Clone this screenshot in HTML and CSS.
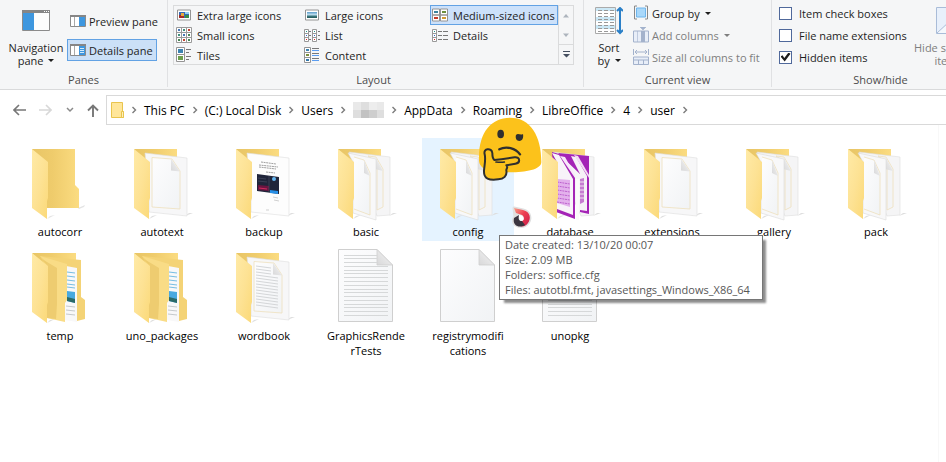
FILE: index.html
```html
<!DOCTYPE html>
<html lang="en">
<head>
<meta charset="utf-8">
<title>user</title>
<link rel="stylesheet" href="styles.css">
</head>
<body>
<svg class="defs" aria-hidden="true">
  <defs>
    <linearGradient id="back" x1="0" x2="1" y1="0" y2="0"><stop offset="0" stop-color="#e8c566"/><stop offset=".45" stop-color="#efcc6c"/><stop offset="1" stop-color="#fbdc81"/></linearGradient>
    <linearGradient id="front" x1="0" x2="1" y1="0" y2="1"><stop offset="0" stop-color="#ffeaa6"/><stop offset=".5" stop-color="#fde294"/><stop offset="1" stop-color="#fbd978"/></linearGradient>
    <linearGradient id="paper" x1="0" x2="1" y1="0" y2="1"><stop offset="0" stop-color="#fdfdfe"/><stop offset="1" stop-color="#f1f3f5"/></linearGradient>
    <linearGradient id="fold" x1="0" x2="1" y1="1" y2="0"><stop offset="0" stop-color="#d8d8d9"/><stop offset="1" stop-color="#f6f6f6"/></linearGradient>
    <linearGradient id="photo" x1="0" x2="0" y1="0" y2="1"><stop offset="0" stop-color="#5b9ccb"/><stop offset=".5" stop-color="#c8e4f1"/><stop offset=".65" stop-color="#3c7a83"/><stop offset="1" stop-color="#265a58"/></linearGradient>
    <linearGradient id="drop" x1="0" x2="1" y1="0" y2="1"><stop offset="0" stop-color="#f9a18a"/><stop offset=".45" stop-color="#ee3f52"/><stop offset="1" stop-color="#c81c48"/></linearGradient>

    <symbol id="folder-back" viewBox="0 0 64 80">
      <path d="M50 64l7-3-1 2-5 2zM19 75l8-4-5 1z" fill="#e4e4e4"/>
      <path d="M4 5h43v36l4 4v19H19L4 40z" fill="url(#back)"/>
    </symbol>
    <symbol id="folder-thin" viewBox="0 0 64 80">
      <path d="M55 72l8-3-4 0zM19 75l8-4-5 1z" fill="#dedede"/>
      <path d="M4 5h43v40H19z" fill="url(#back)"/>
    </symbol>
    <symbol id="folder-front" viewBox="0 0 64 80">
      <path d="M4 5l16 13v36l-1 3v18L4 64z" fill="url(#front)"/>
    </symbol>
    <symbol id="page-one" viewBox="0 0 64 80">
      <path d="M15 9l42 5v58l-38-4V54z" fill="#f7f7f8" stroke="#dedede" stroke-width=".6"/>
      <path d="M22 13.500l20 1.500 8 12v38l-28-2z" fill="url(#paper)" stroke="#eee0bd" stroke-width=".8"/>
      <path d="M41 15v11.500l9 1z" fill="url(#fold)"/>
    </symbol>
    <symbol id="page-two" viewBox="0 0 64 80">
      <path d="M15 8l41 5v58l-13 1z" fill="#f5f5f6" stroke="#dedede" stroke-width=".6"/>
      <path d="M34 12l8 1 7 12v38l-6 3V18z" fill="#f3f4f6" stroke="#eee0bd" stroke-width=".8"/>
      <path d="M42 14l-1 11 8 2z" fill="url(#fold)"/>
      <path d="M14 9l28 6v61l-23-7V18z" fill="#f8f8f9" stroke="#dadada" stroke-width=".6"/>
      <path d="M20 13l10 3 6 13v42l-16-6" fill="url(#paper)" stroke="#eee0bd" stroke-width=".8"/>
      <path d="M30 16v13l6 3z" fill="url(#fold)"/>
    </symbol>
    <symbol id="icon-empty" viewBox="0 0 64 80"><use href="#folder-back"/><use href="#folder-front"/></symbol>
    <symbol id="icon-one" viewBox="0 0 64 80"><use href="#folder-thin"/><use href="#page-one"/><use href="#folder-front"/></symbol>
    <symbol id="icon-two" viewBox="0 0 64 80"><use href="#folder-thin"/><use href="#page-two"/><use href="#folder-front"/></symbol>
    <symbol id="icon-backup" viewBox="0 0 64 80">
      <use href="#folder-thin"/>
      <path d="M15 9l42 5v58l-38-4V54z" fill="#fdfdfd" stroke="#dedede" stroke-width=".6"/>
      <path d="M29 18l15 2M27 21l19 2M27 23l17 2M34 28l9 1" stroke="#888" stroke-width=".8" stroke-dasharray="2 .6"/>
      <path d="M25 30l22 3v17l-22-3z" fill="#20253a"/>
      <path d="M26 41l11 1v5l-11-1z" fill="#6b1540"/>
      <path d="M27 44l8 1" stroke="#d22b5f"/>
      <path d="M38 46l8 1v3l-8-1z" fill="#2790e8"/>
      <path d="M37 32v16M26 34l8 1M26 37l9 1" stroke="#4c5368" stroke-width=".6"/>
      <circle cx="42" cy="35" r="2" fill="#65b8f2"/>
      <path d="M41 53l5 1M42 56l5 1M34 66h3" stroke="#bbb" stroke-width=".7"/>
      <use href="#folder-front"/>
    </symbol>
    <symbol id="icon-wordbook" viewBox="0 0 64 80">
      <use href="#folder-thin"/><use href="#page-one"/>
      <path d="M24 18l15 2M24 21l15 2M24 24l15 2M24 27l22 3M24 30l22 3M24 33l22 3M24 36l22 3M24 39l22 3M24 42l22 3M24 45l22 3M24 48l22 3M24 51l22 3M24 54l22 3M24 57l22 3" stroke="#d4d6d8" stroke-width="1"/>
      <use href="#folder-front"/>
    </symbol>
    <symbol id="icon-database" viewBox="0 0 64 80">
      <use href="#folder-thin"/>
      <path d="M15 8l41 5v58l-13 1z" fill="#f5f5f6" stroke="#dedede" stroke-width=".6"/>
      <path d="M20 9l31 3v58l-9-2V30z" fill="#a424b6"/>
      <path d="M33 12l5 1 11 19v35l-7-1V30z" fill="#f6f1f7"/>
      <path d="M36 11l4 1 11 19v3z" fill="#f3ddf5"/>
      <path d="M42 35l4-1v24l-4 2z" fill="#c67bd0"/>
      <path d="M41 38h5m-5 4h5m-5 4h5m-5 4h5m-5 4h5" stroke="#fff" stroke-width=".8"/>
      <path d="M14 8l11 3 12 22v42l-19-7z" fill="#a424b6"/>
      <path d="M14 9l7 2 14 24v36l-16-6V18z" fill="#f8f3f9"/>
      <path d="M22 12l5 1 10 18v3z" fill="#f8e8fa"/>
      <path d="M20 35l12 1v27l-13-4z" fill="#e3b0ec"/>
      <path d="M19 38l13 2m-13 2l13 2m-13 2l13 2m-13 2l13 2m-13 2l13 2m-13 2l13 2" stroke="#b44ec5" stroke-width=".8" stroke-dasharray="2 .7"/>
      <path d="M38 35h3v41h-3z" fill="#fafafa"/>
      <use href="#folder-front"/>
    </symbol>
    <symbol id="icon-nested" viewBox="0 0 64 80">
      <path d="M19 75l8-4-5 1z" fill="#dedede"/>
      <path d="M4 5h44v22H19z" fill="url(#back)"/>
      <path d="M12 8l41 4v37l4 3v19l-8 2z" fill="#f4d376"/>
      <path d="M38 18l11 2v54l-12-2z" fill="#f8f8f9"/>
      <path d="M39 24l8 1m-8 3l8 1m-8 3l8 1m-8 3l8 1m-8 2l8 1" stroke="#77bde3" stroke-width="1"/>
      <path d="M39 43l8 1v11l-8-2z" fill="#48a9e0"/><path d="M39 49l8 2v4l-8-2z" fill="#2b6a68"/>
      <path d="M38 58l9 1m-9 3l9 1m-9 3l9 1" stroke="#c5c9cc"/>
      <path d="M12 8l27 8v36l-2 3v19l-18-4V15z" fill="#f9dc86"/>
      <path d="M14 11l15 9v36l-1 15-9-1V17z" fill="#e9c768" opacity=".75"/>
      <use href="#folder-front"/>
    </symbol>
    <symbol id="icon-file" viewBox="0 0 64 80">
      <path d="M4.500 1.500H43L58.500 17v56.500h-54z" fill="url(#paper)" stroke="#cfcfcf"/>
      <path d="M43 1.500V17h15.500z" fill="url(#fold)" stroke="#cfcfcf" stroke-width=".8"/>
    </symbol>
    <symbol id="icon-text" viewBox="0 0 64 80">
      <use href="#icon-file"/>
      <path d="M10 7.500h33M10 10.500h33M10 14.500h33M10 18.500h44M10 22.500h44M10 25.500h44M10 29.500h44M10 33.500h44M10 37.500h44M10 41.500h44M10 44.500h44M10 48.500h44M10 52.500h44M10 56.500h44M10 59.500h44M10 63.500h44M10 67.500h44" stroke="#d6d8d9"/>
    </symbol>
    <symbol id="chevron" viewBox="0 0 6 8"><path d="M1.500 1l3 3-3 3" fill="none" stroke="#7b7b7b" stroke-width="1.400"/></symbol>
  </defs>
</svg>

<header class="ribbon">
  <section class="group panes" aria-label="Panes">
    <div class="group-body">
      <button class="big-button nav-pane">
        <svg width="28" height="21" viewBox="0 0 28 21"><path d="M.5.500h27v20H.5z" fill="#fdfdfd" stroke="#8b8b8b"/><path d="M0 0h28v3H0z" fill="#868686"/><path d="M1 3h11v17H1z" fill="#3e97df"/><path d="M22 1h1v1h-1zM24 1h1v1h-1zM26 1h1v1h-1z" fill="#fff"/></svg>
        <span>Navigation<br>pane <i class="caret"></i></span>
      </button>
      <div class="pane-list">
        <button class="small-button">
          <svg width="16" height="12" viewBox="0 0 16 12"><path d="M.5.500h15v11H.5z" fill="#fff" stroke="#8b8b8b"/><path d="M0 0h16v2H0z" fill="#868686"/><path d="M4 2h1v9H4z" fill="#aaa"/><path d="M9 2h6v9H9z" fill="#3e97df"/></svg>
          Preview pane
        </button>
        <button class="small-button pressed" aria-pressed="true">
          <svg width="16" height="12" viewBox="0 0 16 12"><path d="M.5.500h15v11H.5z" fill="#fff" stroke="#8b8b8b"/><path d="M0 0h16v2H0z" fill="#868686"/><path d="M4 2h1v9H4z" fill="#aaa"/><path d="M9 2h6v9H9z" fill="#3e97df"/><path d="M10 4.500h4M10 6.500h4M10 8.500h4" stroke="#d4eafa"/></svg>
          Details pane
        </button>
      </div>
    </div>
    <h2>Panes</h2>
  </section>

  <section class="group layout" aria-label="Layout">
    <div class="gallery">
      <div class="views">
        <button><svg width="16" height="16" viewBox="0 0 16 16"><path d="M1.500 3h13v10h-13z" fill="#fff" stroke="#949494"/><path d="M3 5h10v6H3z" fill="#3569b5"/><path d="M3 8h5v3H3z" fill="#a52b25"/><path d="M5 6h3v3H5z" fill="#e8a93e"/><path d="M9 8h4v3H9z" fill="#3b8c48"/><path d="M9 5h4v2H9z" fill="#8fd0f3"/></svg>Extra large icons</button>
        <button><svg width="16" height="16" viewBox="0 0 16 16"><path d="M1.500 3h13v10h-13z" fill="#fff" stroke="#949494"/><path d="M3 5h10v6H3z" fill="url(#photo)"/></svg>Large icons</button>
        <button class="selected" aria-pressed="true"><svg width="16" height="16" viewBox="0 0 16 16"><path d="M.5 2h7v6h-7zM8.500 2h7v6h-7zM.5 8h7v6h-7zM8.500 8h7v6h-7z" fill="#fff" stroke="#949494"/><path d="M2 4h4v2H2z" fill="#3b83a0"/><path d="M10 4h4v2h-4z" fill="#6c8f3c"/><path d="M2 10h4v2H2z" fill="#c53a2a"/><path d="M10 10h4v2h-4z" fill="#cf9a36"/></svg>Medium-sized icons</button>
        <button><svg width="16" height="16" viewBox="0 0 16 16"><path d="M.5.500h15v15H.5zM5.500 0v16M10.500 0v16M0 5.500h16M0 10.500h16" fill="#fff" stroke="#9a9a9a"/><path d="M2 2h2v2H2zM7 7h2v2H7z" fill="#4678b5"/><path d="M7 2h2v2H7zM2 7h2v2H2z" fill="#41907c"/><path d="M12 2h2v2h-2zM7 12h2v2H7z" fill="#c04432"/><path d="M12 7h2v2h-2zM2 12h2v2H2zM12 12h2v2h-2z" fill="#4a8554"/></svg>Small icons</button>
        <button><svg width="16" height="16" viewBox="0 0 16 16"><path d="M.5 2.500h4v12h-4zM8.500 2.500h4v12h-4zM0 6.500h5M0 10.500h5M8 6.500h5M8 10.500h5" fill="#fff" stroke="#999"/><path d="M2 4h1v1H2zM10 4h1v1h-1z" fill="#298"/><path d="M2 8h1v1H2zM10 8h1v1h-1z" fill="#36c"/><path d="M2 12h1v1H2zM10 12h1v1h-1z" fill="#d22"/><path d="M5 4.500h2M5 8.500h2M5 12.500h2M14 4.500h2M14 8.500h2M14 12.500h2" stroke="#777"/></svg>List</button>
        <button><svg width="16" height="16" viewBox="0 0 16 16"><path d="M.5 2.500h4v12h-4zM0 6.500h5M0 10.500h5" fill="#fff" stroke="#999"/><path d="M2 4h1v1H2z" fill="#298"/><path d="M2 8h1v1H2z" fill="#36c"/><path d="M2 12h1v1H2z" fill="#d22"/><path d="M6 4.500h4M6 8.500h4M6 12.500h4M11 4.500h5M11 8.500h5M11 12.500h5" stroke="#777"/></svg>Details</button>
        <button><svg width="16" height="16" viewBox="0 0 16 16"><path d="M.5.500h8v7h-8zM.5 7.500h8v7h-8z" fill="#fff" stroke="#949494"/><path d="M2 2h5v4H2z" fill="#3b83b0"/><path d="M2 9h5v4H2z" fill="#6c9f4c"/><path d="M10 2.500h5M10 5.500h3M10 9.500h5M10 12.500h3" stroke="#777"/></svg>Tiles</button>
        <button><svg width="16" height="16" viewBox="0 0 16 16"><path d="M.5.500h6v15h-6zM0 5.500h7M0 10.500h7" fill="#fff" stroke="#949494"/><path d="M2 2h3v2H2z" fill="#3b83b0"/><path d="M2 7h3v2H2z" fill="#7c8f3c"/><path d="M2 12h3v2H2z" fill="#37a"/><path d="M8 1.500h7M8 6.500h7M8 11.500h7" stroke="#777"/><path d="M8 3.500h7M8 8.500h7M8 13.500h7" stroke="#5b9df0"/></svg>Content</button>
      </div>
      <div class="spin">
        <button aria-label="Scroll up"><svg width="6" height="4" viewBox="0 0 6 4"><path d="M0 3.500h6L3 0z" fill="#adb4bd"/></svg></button>
        <button aria-label="Scroll down"><svg width="6" height="4" viewBox="0 0 6 4"><path d="M0 .5h6L3 4z" fill="#adb4bd"/></svg></button>
        <button class="more" aria-label="More views"><svg width="7" height="7" viewBox="0 0 7 7"><path d="M0 0h7v1H0zM0 3h7L3.500 6.500z" fill="#454f60"/></svg></button>
      </div>
    </div>
    <h2>Layout</h2>
  </section>

  <section class="group view" aria-label="Current view">
    <div class="group-body">
      <button class="big-button sort">
        <svg width="28" height="28" viewBox="0 0 28 28"><path d="M.5.500h20v26H.5z" fill="#fff" stroke="#aaa"/><path d="M1 1h19v3H1zM1 10h19v4H1zM1 18h19v4H1z" fill="#cbe8f6"/><path d="M3 3.500h16M3 6.500h16M3 9.500h16M3 12.500h16M3 15.500h16M3 18.500h16M3 21.500h16M3 24.500h16" stroke="#999" stroke-dasharray="4 2"/><path d="M25 2v23M22 4l3-3 3 3M22 23l3 3 3-3" fill="none" stroke="#2b80c8" stroke-width="2"/></svg>
        <span>Sort<br>by <i class="caret"></i></span>
      </button>
      <div class="row-list">
        <button><svg width="16" height="16" viewBox="0 0 16 16"><path d="M4 1H1.500v13H4M12 1h2.500v13H12" fill="none" stroke="#888"/><path d="M3.500 3h9v9h-9z" fill="#a9d8fa" stroke="#6fb6ec"/></svg>Group by <i class="caret"></i></button>
        <button disabled><svg width="16" height="16" viewBox="0 0 16 16"><path d="M.5 4h15v11H.5z" fill="#e8eef8" stroke="#a3b2cc"/><path d="M8 4h4v11H8z" fill="#a3b2cc"/><path d="M4.500 4v11M7 0h6l-3 3z" fill="#a3b2cc" stroke="#a3b2cc" stroke-width=".6"/></svg>Add columns <i class="caret"></i></button>
        <button disabled><svg width="16" height="16" viewBox="0 0 16 16"><path d="M.5 0v6M15.500 0v6M2 3h12M4 1L2 3l2 2M12 1l2 2-2 2" fill="none" stroke="#a3b2cc"/><path d="M.5 8h15v7.500H.5zM0 11h16M5.500 11v5M10.500 11v5" fill="#e8eef8" stroke="#a3b2cc"/></svg>Size all columns to fit</button>
      </div>
    </div>
    <h2>Current view</h2>
  </section>

  <section class="group show" aria-label="Show/hide">
    <div class="group-body">
      <div class="check-list">
        <label><input type="checkbox">Item check boxes</label>
        <label><input type="checkbox">File name extensions</label>
        <label><input type="checkbox" checked>Hidden items</label>
      </div>
      <button class="big-button hide" disabled>
        <svg width="26" height="28" viewBox="0 0 26 28"><path d="M.5.500h25v26H.5z" fill="#e8f0fb" stroke="#a9bcd8"/><path d="M1 26L26 3v23z" fill="#f5f8fc"/><path d="M1 26L26 3" stroke="#a9bcd8"/></svg>
        <span>Hide selected<br>items</span>
      </button>
    </div>
    <h2>Show/hide</h2>
  </section>
</header>

<div class="address-row">
  <div class="history">
    <button aria-label="Back"><svg width="13" height="12" viewBox="0 0 13 12"><path d="M13 6H1.500M6 1L1 6l5 5" fill="none" stroke="#777" stroke-width="1.600"/></svg></button>
    <button aria-label="Forward"><svg width="13" height="12" viewBox="0 0 13 12"><path d="M0 6h11.500M7 1l5 5-5 5" fill="none" stroke="#d8d8d8" stroke-width="1.600"/></svg></button>
    <button aria-label="Recent locations"><svg width="8" height="6" viewBox="0 0 8 6"><path d="M1 1l3 3 3-3" fill="none" stroke="#8a8a8a" stroke-width="1.500"/></svg></button>
    <button aria-label="Up"><svg width="12" height="13" viewBox="0 0 12 13"><path d="M6 13V1.500M1 6.500l5-5 5 5" fill="none" stroke="#777" stroke-width="1.900"/></svg></button>
  </div>
  <nav class="crumbs" aria-label="Path">
    <svg class="crumb-folder" width="13" height="16" viewBox="0 0 13 16"><path d="M.5.500h11v9h1v6H.5z" fill="#ffe69a" stroke="#e9c44d"/><path d="M10.500 9.500h2v6h-2z" fill="#fdf0bd" stroke="#e9c44d"/></svg>
    <svg class="sep"><use href="#chevron"/></svg><a href="#">This PC</a>
    <svg class="sep"><use href="#chevron"/></svg><a href="#">(C:) Local Disk</a>
    <svg class="sep"><use href="#chevron"/></svg><a href="#">Users</a>
    <svg class="sep"><use href="#chevron"/></svg><a href="#" aria-label="Profile"><svg class="mosaic" width="31" height="16" viewBox="0 0 31 16" shape-rendering="crispEdges"><path d="M0 0h31v16H0z" fill="#dedede"/><path d="M0 0h8v8H0zM24 0h7v8h-7z" fill="#e9e9e9"/><path d="M8 8h8v8H8z" fill="#c2c2c2"/><path d="M16 8h8v8h-8z" fill="#cecece"/><path d="M16 0h8v8h-8z" fill="#ededed"/></svg></a>
    <svg class="sep"><use href="#chevron"/></svg><a href="#">AppData</a>
    <svg class="sep"><use href="#chevron"/></svg><a href="#">Roaming</a>
    <svg class="sep"><use href="#chevron"/></svg><a href="#">LibreOffice</a>
    <svg class="sep"><use href="#chevron"/></svg><a href="#">4</a>
    <svg class="sep"><use href="#chevron"/></svg><a href="#">user</a>
    <svg class="sep"><use href="#chevron"/></svg>
  </nav>
</div>

<main>
  <ul class="files">
    <li><svg class="icon"><use href="#icon-empty"/></svg><span>autocorr</span></li>
    <li><svg class="icon"><use href="#icon-one"/></svg><span>autotext</span></li>
    <li><svg class="icon"><use href="#icon-backup"/></svg><span>backup</span></li>
    <li><svg class="icon"><use href="#icon-two"/></svg><span>basic</span></li>
    <li class="hovered"><svg class="icon"><use href="#icon-two"/></svg><span>config</span>
      <svg class="thinking" width="64" height="65" viewBox="24 12 192 195" role="img" aria-label="Thinking face">
        <path d="M27 145C24 64 62 17 120 17c62 0 94 55 94 133 0 23-48 31-94 31-62 0-92-8-93-36z" fill="#fcc21b"/>
        <ellipse cx="92" cy="66" rx="10" ry="13" fill="#2f2f2f"/>
        <path d="M138 69c6-7 13 2 21-3 2 10-1 21-11 21-8 0-13-9-10-18z" fill="#2f2f2f"/>
        <path d="M88 112c20-11 49-4 62 15" fill="none" stroke="#2f2f2f" stroke-width="7" stroke-linecap="round"/>
        <path d="M44 127c-5-19 21-21 23-4 0 9 0 16 6 21 22-2 42-5 61-8 17-2 18 17 2 19l-27 5c7 6-1 11 0 15 3 17-8 26-24 27-28 4-44-2-43-25 1-17 6-34 2-50z" fill="#fcc21b" stroke="#2f2f2f" stroke-width="6" stroke-linejoin="round"/>
        <path d="M78 150c11 1 18 1 25 0" fill="none" stroke="#2f2f2f" stroke-width="5" stroke-linecap="round"/>
      </svg>
      <svg class="pointer" width="22" height="26" viewBox="0 0 22 26" aria-hidden="true">
        <path d="M3 4l9 2c8 2 8 9 5 13-4 5-11 4-14 0-1-3 0-5 1-6z" fill="#e0e0e0" stroke="#e0e0e0" stroke-width="3" stroke-linejoin="round"/>
        <path d="M3 4l9 2c8 2 8 9 5 13-2 3-5 4-8 3l1-5c3 0 4-4 1-6L5 9z" fill="url(#drop)"/>
        <path d="M3 14l5-3c-1 4 0 6 3 6l3 4c-4 3-13 2-11-7z" fill="#3b3540"/>
        <path d="M8 11c5 0 6 5 3 6-3 0-3-3-3-6z" fill="#fff"/>
      </svg>
      <div class="tip" role="tooltip">Date created: 13/10/20 00:07<br>Size: 2.09 MB<br>Folders: soffice.cfg<br>Files: autotbl.fmt, javasettings_Windows_X86_64</div>
    </li>
    <li><svg class="icon"><use href="#icon-database"/></svg><span>database</span></li>
    <li><svg class="icon"><use href="#icon-one"/></svg><span>extensions</span></li>
    <li><svg class="icon"><use href="#icon-two"/></svg><span>gallery</span></li>
    <li><svg class="icon"><use href="#icon-two"/></svg><span>pack</span></li>
    <li><svg class="icon"><use href="#icon-nested"/></svg><span>temp</span></li>
    <li><svg class="icon"><use href="#icon-nested"/></svg><span>uno_packages</span></li>
    <li><svg class="icon"><use href="#icon-wordbook"/></svg><span>wordbook</span></li>
    <li><svg class="icon"><use href="#icon-text"/></svg><span>GraphicsRende<br>rTests</span></li>
    <li><svg class="icon"><use href="#icon-file"/></svg><span>registrymodifi<br>cations</span></li>
    <li><svg class="icon"><use href="#icon-text"/></svg><span>unopkg</span></li>
  </ul>
</main>
</body>
</html>
```
FILE: styles.css
```css
* { box-sizing: border-box; }

body {
  margin: 0;
  min-height: 100vh;
  display: flex;
  flex-direction: column;
  background: #fff;
  color: #000;
  font: 11px/15px "Open Sans", "Noto Sans", sans-serif;
}

.defs { position: absolute; width: 0; height: 0; }

svg { display: block; flex: none; }

button {
  margin: 0;
  padding: 0;
  border: 0;
  background: none;
  color: inherit;
  font: inherit;
  white-space: nowrap;
}

button:disabled { color: #7e7e7e; }

/* Ribbon */
.ribbon {
  display: flex;
  height: 90px;
  overflow: hidden;
  background: #f5f6f7;
  border-bottom: 1px solid #d9dadb;
  color: #1e1e1e;
}

.group {
  flex: none;
  display: flex;
  flex-direction: column;
  height: 87px;
  border-right: 1px solid #e0e1e3;
}

.group h2 {
  margin: auto 0 0;
  font: inherit;
  text-align: center;
  color: #4c4c4c;
}

.group-body { display: flex; }

.panes { width: 168px; }
.layout { width: 416px; padding: 5px 9px 0 5px; }
.view { width: 188px; }
.show { width: 218px; }

.big-button {
  display: flex;
  flex-direction: column;
  align-items: center;
  line-height: 13px;
}

.big-button span { margin-top: auto; }

.caret {
  display: inline-block;
  margin-left: 2px;
  border: 3px solid transparent;
  border-top: 3px solid currentColor;
  border-bottom: 0;
  vertical-align: 3px;
}

.nav-pane { width: 58px; height: 67px; padding-top: 10px; margin-left: 7px; }

.pane-list {
  width: 92px;
  display: flex;
  flex-direction: column;
  gap: 7px;
  padding: 10px 0 0 2px;
}

.small-button {
  display: flex;
  align-items: center;
  gap: 3px;
  height: 22px;
  padding: 0 2px;
  border: 1px solid transparent;
}

.small-button.pressed { background: #cbe0f7; border-color: #62a2e4; }

.gallery {
  display: flex;
  height: 60px;
  border: 1px solid #dadbdc;
}

.views {
  flex: 1;
  display: grid;
  grid-template-columns: repeat(3, 128px);
  grid-auto-rows: 20px;
  margin-top: -1px;
}

.views button {
  display: flex;
  align-items: center;
  gap: 5px;
  padding: 0 1px;
  border: 1px solid transparent;
}

.views .selected { background: #cce1fa; border-color: #62a2e4; }

.spin {
  width: 15px;
  display: flex;
  flex-direction: column;
  border-left: 1px solid #dadbdc;
}

.spin button {
  flex: 1;
  display: flex;
  align-items: center;
  justify-content: center;
}

.spin .more { border-top: 1px solid #dadbdc; }

.sort { width: 30px; height: 67px; padding-top: 7px; margin-left: 10px; }

.row-list, .check-list {
  display: flex;
  flex-direction: column;
  padding-top: 2px;
}

.row-list { margin-left: 9px; }
.check-list { width: 135px; margin-left: 7px; }

.row-list button, .check-list label {
  display: flex;
  align-items: center;
  height: 22px;
  white-space: nowrap;
}

.row-list button { gap: 3px; }

.check-list input {
  appearance: none;
  width: 13px;
  height: 13px;
  margin: 0 7px 0 0;
  background: #fff;
  border: 1px solid #50699b;
}

.check-list input:checked {
  display: grid;
  place-items: center;
}

.check-list input:checked::before {
  content: "";
  width: 10px;
  height: 9px;
  background: #1e1e1e;
  clip-path: polygon(0 45%, 20% 30%, 38% 60%, 80% 0, 100% 15%, 42% 100%);
}

.hide { height: 67px; padding-top: 7px; }

/* Address bar */
.address-row {
  display: flex;
  margin-top: 5px;
  font-size: 12px;
}

.history {
  flex: none;
  width: 106px;
  display: flex;
  align-items: center;
  justify-content: space-between;
  padding: 0 7px 0 13px;
}

.crumbs {
  flex: 1;
  display: flex;
  align-items: center;
  height: 30px;
  padding-left: 4px;
  border: 1px solid #d9d9d9;
  border-right: 0;
}

.crumbs a {
  color: inherit;
  text-decoration: none;
  white-space: nowrap;
}

.sep { width: 6px; height: 8px; margin: 0 7px; }

/* File list */
main {
  flex: 1;
  margin-right: 7px;
  border-right: 1px solid #f8f8f8;
}

.files {
  display: grid;
  grid-template-columns: repeat(auto-fill, 92px);
  gap: 1px 10px;
  margin: 0;
  padding: 13px 14px;
  list-style: none;
}

.files li {
  position: relative;
  display: flex;
  flex-direction: column;
  align-items: center;
  min-height: 103px;
  padding: 6px 0 2px;
  text-align: center;
}

.files .hovered { z-index: 1; background: #e5f3ff; }

.icon { width: 64px; height: 80px; }

.thinking { position: absolute; left: 56px; top: -22px; }
.pointer { position: absolute; left: 89px; top: 66px; }

.tip {
  position: absolute;
  left: 77px;
  top: 97px;
  padding: 1px 12px 2px 5px;
  background: #fff;
  border: 1px solid #767676;
  box-shadow: 4px 4px 2px -1px rgba(0, 0, 0, .45);
  color: #575757;
  text-align: left;
  white-space: nowrap;
}
```
